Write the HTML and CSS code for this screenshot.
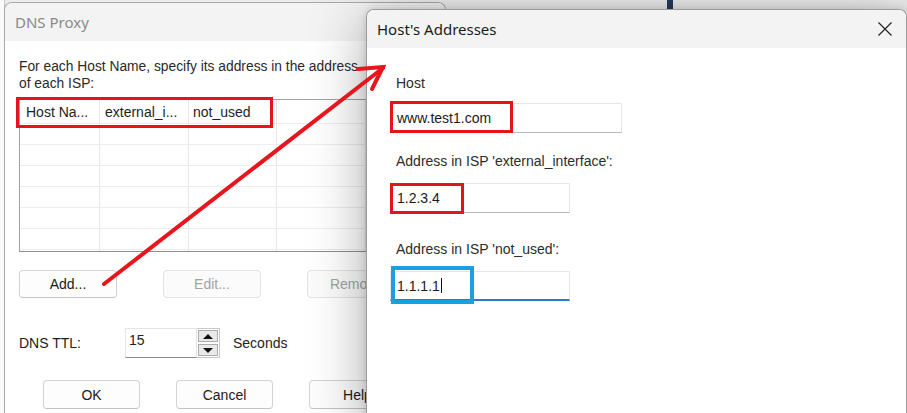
FILE: index.html
```html
<!DOCTYPE html>
<html>
<head>
<meta charset="utf-8">
<title>DNS Proxy</title>
<link rel="stylesheet" href="styles.css">
</head>
<body>
<div class="desk">
  <div class="bgwin"></div>
  <div class="navy"></div>

  <section class="dlg dns">
    <header class="tbar"><span class="ttl">DNS Proxy</span></header>
    <div class="dbody">
      <p class="intro">For each Host Name, specify its address in the address<br>of each ISP:</p>
      <div class="list">
        <div class="lrow lhead">
          <div class="c c1">Host Na...</div><div class="c c2">external_i...</div><div class="c c3">not_used</div><div class="c c4"></div><div class="c c5"></div>
        </div>
        <div class="lrow"><div class="c c1"></div><div class="c c2"></div><div class="c c3"></div><div class="c c4"></div><div class="c c5"></div></div>
        <div class="lrow"><div class="c c1"></div><div class="c c2"></div><div class="c c3"></div><div class="c c4"></div><div class="c c5"></div></div>
        <div class="lrow"><div class="c c1"></div><div class="c c2"></div><div class="c c3"></div><div class="c c4"></div><div class="c c5"></div></div>
        <div class="lrow"><div class="c c1"></div><div class="c c2"></div><div class="c c3"></div><div class="c c4"></div><div class="c c5"></div></div>
        <div class="lrow"><div class="c c1"></div><div class="c c2"></div><div class="c c3"></div><div class="c c4"></div><div class="c c5"></div></div>
        <div class="lrow"><div class="c c1"></div><div class="c c2"></div><div class="c c3"></div><div class="c c4"></div><div class="c c5"></div></div>
        <div class="lrow"><div class="c c1"></div><div class="c c2"></div><div class="c c3"></div><div class="c c4"></div><div class="c c5"></div></div>
      </div>
      <div class="mark mark-head"></div>
      <div class="btnrow">
        <button class="btn">Add...</button>
        <button class="btn" disabled>Edit...</button>
        <button class="btn" disabled>Remove</button>
      </div>
      <div class="ttlrow">
        <span class="ttllbl">DNS TTL:</span>
        <div class="spin">
          <div class="spin-in">15</div>
          <div class="spin-btns"><span class="sb up"></span><span class="sb dn"></span></div>
        </div>
        <span class="secs">Seconds</span>
      </div>
      <div class="btnrow bottom">
        <button class="btn">OK</button>
        <button class="btn">Cancel</button>
        <button class="btn">Help</button>
      </div>
    </div>
  </section>

  <section class="dlg host">
    <header class="tbar">
      <span class="ttl">Host's Addresses</span>
      <svg class="close" width="14" height="14" viewBox="0 0 14 14"><path d="M0.5 0.5 L13.5 13.5 M13.5 0.5 L0.5 13.5" stroke="#222" stroke-width="1.2" fill="none"/></svg>
    </header>
    <div class="hbody">
      <div class="field f1">
        <label class="flbl">Host</label>
        <div class="inp w1"><span>www.test1.com</span><div class="mark mark-red r1"></div></div>
      </div>
      <div class="field f2">
        <label class="flbl">Address in ISP 'external_interface':</label>
        <div class="inp w2"><span>1.2.3.4</span><div class="mark mark-red r2"></div></div>
      </div>
      <div class="field f3">
        <label class="flbl">Address in ISP 'not_used':</label>
        <div class="inp w2 focus"><span>1.1.1.1</span><i class="caret"></i><div class="mark mark-blue"></div></div>
      </div>
    </div>
  </section>

  <svg class="arrow" width="907" height="413" viewBox="0 0 907 413">
    <g stroke="#e8151d" stroke-width="4" stroke-linecap="round" fill="none">
      <path d="M104 284 L383 68"/>
      <path d="M358 69 L383 67 L372 89"/>
    </g>
  </svg>
</div>
</body>
</html>
```

FILE: styles.css
```css
* { box-sizing: border-box; }
html, body { margin: 0; padding: 0; }
body {
  width: 907px;
  height: 413px;
  overflow: hidden;
  background: #ececec;
  font-family: "Liberation Sans", Arial, sans-serif;
  font-size: 14px;
  color: #222;
}
.desk { position: relative; width: 907px; height: 413px; overflow: hidden; }

.bgwin {
  position: absolute; left: 0; top: 0; width: 5px; height: 413px;
  background: #fafafa; border-right: 1px solid #c4c4c4;
}
.navy { position: absolute; left: 667px; top: 0; width: 6px; height: 10px; background: #23395c; }

.dlg {
  position: absolute;
  background: #fff;
  border: 1px solid #a8a8a8;
  border-bottom: none;
  border-radius: 8px 8px 0 0;
  overflow: hidden;
}
.dns { left: 4px; top: 2px; width: 442px; height: 420px; }
.host {
  left: 366px; top: 9px; width: 541px; height: 420px;
  border-color: #9c9c9c;
  box-shadow: 0 12px 56px rgba(0,0,0,0.34), 0 0 8px rgba(0,0,0,0.14);
}

.tbar {
  height: 38px;
  background: #f3f3f3;
  display: flex;
  align-items: center;
  justify-content: space-between;
  padding: 0 14px 0 10px;
  font-family: "Noto Sans", sans-serif;
  font-size: 15px;
}
.dns .tbar { color: #8a8a8a; }
.host .tbar { color: #1a1a1a; }
.close { display: block; }

/* DNS proxy body */
.dbody { position: relative; padding: 17px 0 0 14px; }
.intro { margin: 0; line-height: 17px; font-size: 13.8px; color: #2a2a2a; }

.list {
  margin-top: 7px;
  width: 425px;
  height: 153px;
  border: 1px solid #a2a2a2;
  border-right: none;
  border-bottom-color: #8e8e8e;
  overflow: hidden;
  background: #fff;
}
.lrow { display: flex; height: 21px; border-bottom: 1px solid #ececec; }
.lrow.lhead { height: 24px; align-items: stretch; }
.c { border-right: 1px solid #e6e6e6; flex: none; display: flex; align-items: center; padding-left: 5px; white-space: nowrap; color: #1e1e1e; }
.c1 { width: 80px; padding-left: 6px; }
.c2 { width: 89px; }
.c3 { width: 88px; padding-left: 4px; }
.c4 { width: 89px; }
.c5 { width: 80px; }

.mark { position: absolute; pointer-events: none; }
.mark-head { left: 11px; top: 56px; width: 257px; height: 31px; border: 3.5px solid #e3141b; }

.btnrow { display: flex; gap: 46px; margin-top: 18px; }
.btn {
  width: 98px; height: 28px; flex: none;
  font-family: "Liberation Sans", Arial, sans-serif;
  font-size: 14px;
  color: #1a1a1a;
  background: #fdfdfd;
  border: 1px solid #d3d3d3;
  border-bottom-color: #c3c3c3;
  border-radius: 4px;
  padding: 0;
}
.btn:disabled { color: #a3a3a3; border-color: #e3e3e3; background: #fbfbfb; }
.btnrow.bottom { gap: 36px; margin-top: 22px; padding-left: 24px; }
.btnrow.bottom .btn { width: 97px; height: 29px; }

.ttlrow { display: flex; align-items: center; margin-top: 30px; height: 30px; }
.ttllbl { width: 106px; flex: none; }
.spin { display: flex; height: 30px; }
.spin-in {
  width: 72px; height: 30px;
  border: 1px solid #e4e4e4; border-bottom: 1px solid #8a8a8a;
  padding: 3px 0 0 3px;
  background: #fff;
}
.spin-btns { display: flex; flex-direction: column; width: 23px; height: 30px; border: 1px solid #c9c9c9; border-left: none; }
.sb {
  flex: 1; display: flex; align-items: center; justify-content: center;
  background: #e9e9e9; border: 1px solid #adadad; margin: 1px;
}
.sb::after { content: ""; width: 0; height: 0; border-left: 5px solid transparent; border-right: 5px solid transparent; }
.sb.up::after { border-bottom: 5px solid #111; }
.sb.dn::after { border-top: 5px solid #111; }
.secs { margin-left: 13px; }

/* Host's addresses body */
.hbody { padding: 27px 0 0 23px; }
.field { display: flex; flex-direction: column; align-items: flex-start; }
.flbl { display: block; line-height: 17px; padding-left: 6px; color: #2c2c2c; }
.f1 .flbl { margin-bottom: 11px; }
.f2 { margin-top: 20px; }
.f2 .flbl { margin-bottom: 13px; }
.f3 { margin-top: 28px; }
.f3 .flbl { margin-bottom: 13px; }

.inp {
  position: relative;
  height: 30px;
  display: flex; align-items: center;
  padding-left: 6px;
  background: #fff;
  border: 1px solid #e6e6e6;
  border-bottom: 1px solid #b9b9b9;
  color: #1a1a1a;
}
.w1 { width: 232px; }
.w2 { width: 180px; }
.inp.focus { border-bottom: 2px solid #2a79cf; }
.caret { display: inline-block; width: 1px; height: 15px; background: #111; margin-left: 1px; }

.mark-red { border: 3.5px solid #e3141b; }
.r1 { left: -1px; top: -3px; width: 123px; height: 32px; }
.r2 { left: -1px; top: -1px; width: 74px; height: 31px; }
.mark-blue { left: 0; top: -6px; width: 83px; height: 38px; border: 4px solid #1a9fe3; }

.arrow { position: absolute; left: 0; top: 0; pointer-events: none; }
```
